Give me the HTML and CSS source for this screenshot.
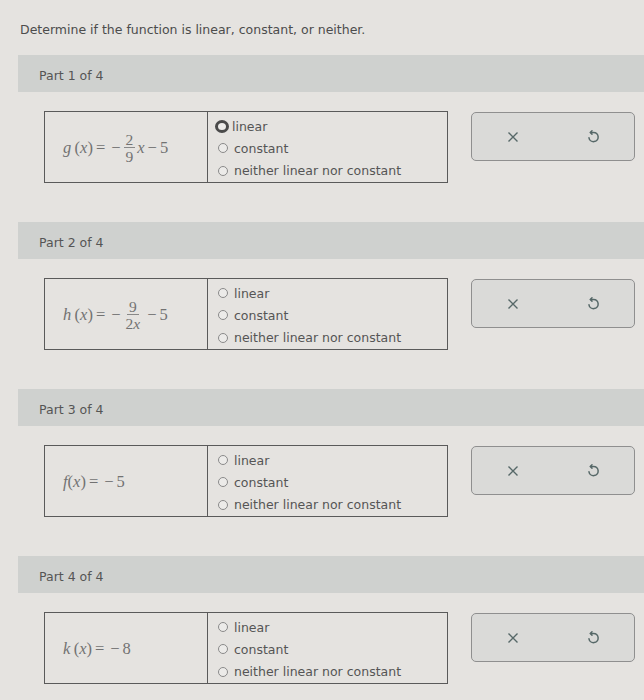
FILE: index.html
```html
<!DOCTYPE html>
<html>
<head>
<meta charset="utf-8">
<link rel="stylesheet" href="styles.css">
</head>
<body>
<p class="prompt">Determine if the function is linear, constant, or neither.</p>

<section class="part">
  <div class="part-head">Part 1 of 4</div>
  <div class="part-body">
    <div class="q">
      <div class="fn"><span class="m"><i>g</i>&thinsp;(<i>x</i>)</span><span class="op">=</span><span class="op">−</span><span class="frac"><span class="num">2</span><span class="den">9</span></span><span class="m"><i>x</i></span><span class="op">−</span><span class="m">5</span></div>
      <div class="opts">
        <label class="opt"><span class="radio focus"></span>linear</label>
        <label class="opt"><span class="radio"></span>constant</label>
        <label class="opt"><span class="radio"></span>neither linear nor constant</label>
      </div>
    </div>
    <div class="actions">
      <span class="act"><svg class="ico-x" viewBox="0 0 12 12"><path d="M1.5 1.5L10.5 10.5M10.5 1.5L1.5 10.5"/></svg></span>
      <span class="act"><svg class="ico-r" viewBox="0 0 14 14"><path d="M4.2 3.2H7A4.3 4.3 0 1 1 2.8 8.2"/><path d="M5.6 1.6L4 3.2L5.6 4.8"/></svg></span>
    </div>
  </div>
</section>

<section class="part">
  <div class="part-head">Part 2 of 4</div>
  <div class="part-body">
    <div class="q">
      <div class="fn"><span class="m"><i>h</i>&thinsp;(<i>x</i>)</span><span class="op">=</span><span class="op">−</span><span class="frac"><span class="num">9</span><span class="den">2<i>x</i></span></span><span class="op">−</span><span class="m">5</span></div>
      <div class="opts">
        <label class="opt"><span class="radio"></span>linear</label>
        <label class="opt"><span class="radio"></span>constant</label>
        <label class="opt"><span class="radio"></span>neither linear nor constant</label>
      </div>
    </div>
    <div class="actions">
      <span class="act"><svg class="ico-x" viewBox="0 0 12 12"><path d="M1.5 1.5L10.5 10.5M10.5 1.5L1.5 10.5"/></svg></span>
      <span class="act"><svg class="ico-r" viewBox="0 0 14 14"><path d="M4.2 3.2H7A4.3 4.3 0 1 1 2.8 8.2"/><path d="M5.6 1.6L4 3.2L5.6 4.8"/></svg></span>
    </div>
  </div>
</section>

<section class="part">
  <div class="part-head">Part 3 of 4</div>
  <div class="part-body">
    <div class="q">
      <div class="fn"><span class="m"><i>f</i>(<i>x</i>)</span><span class="op">=</span><span class="op">−</span><span class="m">5</span></div>
      <div class="opts">
        <label class="opt"><span class="radio"></span>linear</label>
        <label class="opt"><span class="radio"></span>constant</label>
        <label class="opt"><span class="radio"></span>neither linear nor constant</label>
      </div>
    </div>
    <div class="actions">
      <span class="act"><svg class="ico-x" viewBox="0 0 12 12"><path d="M1.5 1.5L10.5 10.5M10.5 1.5L1.5 10.5"/></svg></span>
      <span class="act"><svg class="ico-r" viewBox="0 0 14 14"><path d="M4.2 3.2H7A4.3 4.3 0 1 1 2.8 8.2"/><path d="M5.6 1.6L4 3.2L5.6 4.8"/></svg></span>
    </div>
  </div>
</section>

<section class="part">
  <div class="part-head">Part 4 of 4</div>
  <div class="part-body">
    <div class="q">
      <div class="fn"><span class="m"><i>k</i>&thinsp;(<i>x</i>)</span><span class="op">=</span><span class="op">−</span><span class="m">8</span></div>
      <div class="opts">
        <label class="opt"><span class="radio"></span>linear</label>
        <label class="opt"><span class="radio"></span>constant</label>
        <label class="opt"><span class="radio"></span>neither linear nor constant</label>
      </div>
    </div>
    <div class="actions">
      <span class="act"><svg class="ico-x" viewBox="0 0 12 12"><path d="M1.5 1.5L10.5 10.5M10.5 1.5L1.5 10.5"/></svg></span>
      <span class="act"><svg class="ico-r" viewBox="0 0 14 14"><path d="M4.2 3.2H7A4.3 4.3 0 1 1 2.8 8.2"/><path d="M5.6 1.6L4 3.2L5.6 4.8"/></svg></span>
    </div>
  </div>
</section>
</body>
</html>
```

FILE: styles.css
```css
html, body {
  margin: 0;
  padding: 0;
  background: #e5e3e0;
  font-family: "DejaVu Sans", Verdana, sans-serif;
  color: #555;
}

.prompt {
  margin: 0;
  padding: 22px 0 0 20px;
  height: 33px;
  font-size: 12.5px;
  line-height: 16px;
  color: #4c4c4c;
}

.part {
  padding-bottom: 39px;
}

.part-head {
  margin-left: 18px;
  height: 37px;
  padding: 3px 0 0 21px;
  box-sizing: border-box;
  display: flex;
  align-items: center;
  background: #cfd1cf;
  font-size: 12.5px;
  color: #555;
}

.part-body {
  display: flex;
  align-items: flex-start;
  padding: 19px 0 0 44px;
}

.q {
  width: 404px;
  height: 72px;
  box-sizing: border-box;
  border: 1.5px solid #5a5a5a;
  display: flex;
}

.fn {
  width: 163px;
  box-sizing: border-box;
  border-right: 1.5px solid #5a5a5a;
  padding: 2px 0 0 18px;
  display: flex;
  align-items: center;
  font-family: "Liberation Serif", "Times New Roman", serif;
  font-size: 16.5px;
  color: #727272;
}

.fn i {
  font-style: italic;
}

.m {
  white-space: nowrap;
}

.op {
  margin: 0 3px;
}

.frac {
  display: inline-flex;
  flex-direction: column;
  align-items: center;
  margin: 0 2px 0 0;
  font-size: 15.5px;
  line-height: 15.5px;
}

.num {
  padding: 0 2px 0;
  border-bottom: 1px solid #888;
}

.den {
  padding: 1px 2px 0;
}

.opts {
  flex: 1;
  display: flex;
  flex-direction: column;
  padding: 3px 0 0 10px;
}

.opt {
  height: 23px;
  display: flex;
  align-items: center;
  font-size: 12.5px;
  color: #555;
}

.radio {
  width: 10px;
  height: 10px;
  box-sizing: border-box;
  border: 1.3px solid #8a8a8a;
  border-radius: 50%;
  background: #ecebe9;
  margin-right: 6px;
}

.radio.focus {
  width: 14px;
  height: 13px;
  border: 3px solid #4a4a4a;
  margin: 0 3px 0 -3px;
}

.actions {
  margin: 1px 0 0 23px;
  width: 164px;
  height: 49px;
  box-sizing: border-box;
  border: 1.3px solid #8f8f8f;
  border-radius: 5px;
  background: #dadad8;
  display: flex;
}

.act {
  flex: 1;
  display: flex;
  align-items: center;
  justify-content: center;
}

.ico-x {
  width: 12px;
  height: 12px;
  fill: none;
  stroke: #566868;
  stroke-width: 1.4;
}

.ico-r {
  width: 15px;
  height: 15px;
  fill: none;
  stroke: #566868;
  stroke-width: 1.4;
  stroke-linecap: round;
  stroke-linejoin: round;
}
```
